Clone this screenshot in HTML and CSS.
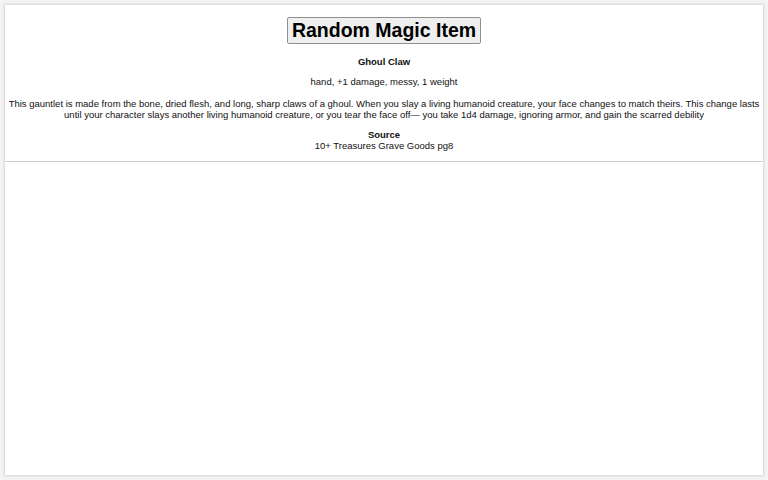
FILE: index.html
```html
<!DOCTYPE html>
<html>
<head>
<meta charset="utf-8">
<link rel="stylesheet" href="styles.css">
</head>
<body>
<div class="card">
  <div class="top">
    <button class="gen">Random Magic Item</button>
    <div class="name">Ghoul Claw</div>
    <div class="tags">hand, +1 damage, messy, 1 weight</div>
    <p class="desc">This gauntlet is made from the bone, dried flesh, and long, sharp claws of a ghoul. When you slay a living humanoid creature, your face changes to match theirs. This change lasts until your character slays another living humanoid creature, or you tear the face off— you take 1d4 damage, ignoring armor, and gain the scarred debility</p>
    <div class="src-label">Source</div>
    <div class="src">10+ Treasures Grave Goods pg8</div>
  </div>
</div>
</body>
</html>
```
FILE: styles.css
```css
html, body {
  margin: 0;
  padding: 0;
  background: #f3f3f3;
  height: 100%;
}
body {
  padding: 4px;
  box-sizing: border-box;
  font-family: "Liberation Sans", Arial, sans-serif;
  color: #111;
}
.card {
  background: #fff;
  border: 1px solid #dedede;
  box-shadow: 0 0 2px rgba(0,0,0,0.12);
  height: 100%;
  box-sizing: border-box;
}
.top {
  text-align: center;
  padding: 12px 2px 10px;
  border-bottom: 1px solid #cfcfcf;
}
.gen {
  font-family: "Liberation Sans", Arial, sans-serif;
  font-size: 19.5px;
  font-weight: bold;
  color: #000;
  background: #efefef;
  border: 1px solid #8f8f8f;
  border-radius: 2px;
  padding: 0 4px 2px;
  height: 27px;
  line-height: 22px;
  margin: 0;
}
.name {
  font-size: 9.5px;
  font-weight: bold;
  margin-top: 12px;
}
.tags {
  font-size: 9.5px;
  margin-top: 9px;
}
.desc {
  font-size: 9.5px;
  line-height: 11px;
  margin: 11px 0 0;
}
.src-label {
  font-size: 9.5px;
  font-weight: bold;
  margin-top: 9px;
}
.src {
  font-size: 9.5px;
}
```
